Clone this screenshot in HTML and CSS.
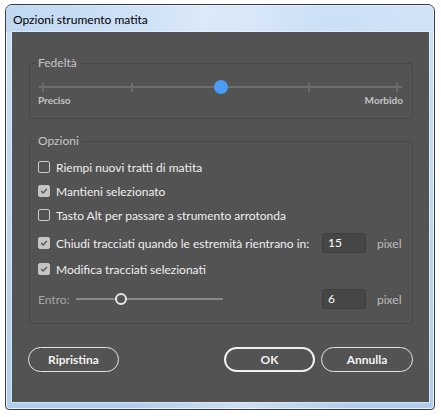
FILE: index.html
```html
<!DOCTYPE html>
<html lang="it">
<head>
<meta charset="utf-8">
<title>Opzioni strumento matita</title>
<link rel="stylesheet" href="styles.css">
</head>
<body>
<div class="window">
  <div class="titlebar">Opzioni strumento matita</div>
  <div class="content">
    <fieldset class="group group-fid">
      <legend>Fedeltà</legend>
      <div class="fslider">
        <div class="ftrack">
          <span class="tick"></span><span class="tick"></span><span class="tick"></span><span class="tick"></span><span class="tick"></span>
        </div>
        <span class="fthumb"></span>
      </div>
      <div class="flabels"><span>Preciso</span><span>Morbido</span></div>
    </fieldset>

    <fieldset class="group group-opt">
      <legend>Opzioni</legend>
      <div class="row r1"><span class="cb"></span><span class="lbl">Riempi nuovi tratti di matita</span></div>
      <div class="row r2"><span class="cb on"><svg viewBox="0 0 12 12"><path d="M2.6 6.1 L5 8.4 L9.4 3.6"/></svg></span><span class="lbl">Mantieni selezionato</span></div>
      <div class="row r3"><span class="cb"></span><span class="lbl">Tasto Alt per passare a strumento arrotonda</span></div>
      <div class="row r4"><span class="cb on"><svg viewBox="0 0 12 12"><path d="M2.6 6.1 L5 8.4 L9.4 3.6"/></svg></span><span class="lbl">Chiudi tracciati quando le estremità rientrano in:</span>
        <span class="field"><span class="input">15</span><span class="unit">pixel</span></span></div>
      <div class="row r5"><span class="cb on"><svg viewBox="0 0 12 12"><path d="M2.6 6.1 L5 8.4 L9.4 3.6"/></svg></span><span class="lbl">Modifica tracciati selezionati</span></div>
      <div class="row r6"><span class="dim">Entro:</span>
        <span class="eslider"><span class="etrack"></span><span class="ethumb"></span></span>
        <span class="field"><span class="input">6</span><span class="unit">pixel</span></span></div>
    </fieldset>

    <div class="buttons">
      <button class="btn">Ripristina</button>
      <span class="spacer"></span>
      <button class="btn primary">OK</button>
      <button class="btn wide">Annulla</button>
    </div>
  </div>
</div>
</body>
</html>
```

FILE: styles.css
```css
* { box-sizing: border-box; }
html, body { margin: 0; padding: 0; }
body {
  width: 441px;
  height: 417px;
  overflow: hidden;
  background: #ffffff;
  font-family: Lato, "Liberation Sans", sans-serif;
}
.window {
  margin: 4px 0 0 5px;
  width: 430px;
  height: 406px;
  border: 1px solid #3a3d42;
  border-radius: 7px 7px 4px 4px;
  background:
    linear-gradient(to right, rgba(255,255,255,0) 30%, rgba(255,255,255,0.35) 55%, rgba(255,255,255,0) 80%),
    linear-gradient(to bottom, #cde0f6 0%, #bcd5ef 60%, #b2cdec 100%);
  box-shadow: inset 0 0 0 1px rgba(255,255,255,0.75);
  display: flex;
  flex-direction: column;
}
.titlebar {
  height: 27px;
  padding-left: 7px;
  font-size: 12px;
  line-height: 29px;
  color: #000;
  background: linear-gradient(to right, rgba(190,215,242,0.9) 0%, rgba(222,236,250,0.5) 45%, rgba(200,222,246,0.6) 75%, rgba(214,230,248,0.6) 100%);
  border-radius: 6px 6px 0 0;
}
.content {
  margin: 0 5px 0 6px;
  height: 370px;
  background: #535353;
  box-shadow: 0 0 0 1px rgba(235,243,252,0.6);
  padding: 23px 16px 0 17px;
  display: flex;
  flex-direction: column;
}
.group {
  margin: 0;
  border: 1px solid #484848;
  border-radius: 3px;
  min-width: 0;
}
.group legend {
  padding: 0 3px;
  font-size: 12px;
  line-height: 16px;
  color: #c6c6c6;
}
.group-fid { padding: 9px 10px 12px 5px; }
.group-opt { margin-top: 14px; padding: 6px 10px 4px 5px; }

.fslider {
  position: relative;
  height: 14px;
  margin-left: 4px;
  display: flex;
  align-items: center;
}
.ftrack {
  flex: 1;
  height: 2px;
  background: #6d6d6d;
  display: flex;
  justify-content: space-between;
  align-items: center;
  padding: 0 4px 0 3px;
}
.tick {
  width: 2px;
  height: 9px;
  background: #6d6d6d;
}
.fthumb {
  position: absolute;
  left: 50%;
  top: 50%;
  width: 14px;
  height: 14px;
  margin: -7px 0 0 -7px;
  border-radius: 50%;
  background: #4b9cf5;
}
.flabels {
  display: flex;
  justify-content: space-between;
  height: 12px;
  line-height: 12px;
  font-size: 10px;
  font-weight: 700;
  color: #c4c4c4;
  padding-left: 3px;
  margin-right: -1px;
}

.row {
  display: flex;
  align-items: center;
  padding-left: 3px;
  font-size: 12px;
  color: #efefef;
}
.r1, .r2, .r3 { height: 24px; }
.r4 { height: 32px; }
.r5 { height: 20px; }
.r6 { height: 40px; }
.cb {
  width: 12px;
  height: 12px;
  flex: none;
  border: 1px solid #cdcdcd;
  border-radius: 2px;
  margin-right: 6px;
  display: flex;
}
.cb.on {
  background: #c4c4c4;
  border-color: #c4c4c4;
}
.cb svg { width: 10px; height: 10px; }
.cb path {
  fill: none;
  stroke: #5a5a5a;
  stroke-width: 1.7;
}
.field {
  margin-left: auto;
  display: flex;
  align-items: center;
}
.input {
  width: 44px;
  height: 20px;
  background: #464646;
  border: 1px solid #3e3e3e;
  border-radius: 3px;
  color: #ffffff;
  font-size: 12px;
  line-height: 18px;
  padding-left: 5px;
  margin-right: 11px;
}
.unit {
  width: 25px;
  color: #bdbdbd;
  font-size: 12px;
}
.dim { color: #a6a6a6; }
.eslider {
  position: relative;
  width: 147px;
  height: 12px;
  margin-left: 6px;
  display: flex;
  align-items: center;
}
.etrack {
  flex: 1;
  height: 2px;
  background: #8a8a8a;
}
.ethumb {
  position: absolute;
  left: 39px;
  top: 0;
  width: 12px;
  height: 12px;
  border: 2px solid #e6e6e6;
  border-radius: 50%;
  background: #535353;
}

.buttons {
  margin-top: 23px;
  margin-left: -1px;
  display: flex;
  gap: 6px;
}
.spacer { flex: 1; }
.btn {
  width: 91px;
  height: 25px;
  border: 1.5px solid #e2e2e2;
  border-radius: 13px;
  background: transparent;
  color: #f2f2f2;
  font-family: Lato, "Liberation Sans", sans-serif;
  font-size: 12px;
  font-weight: 700;
  padding: 0;
}
.btn.primary { border: 2px solid #f0f0f0; }
.btn.wide { width: 92px; }
```
